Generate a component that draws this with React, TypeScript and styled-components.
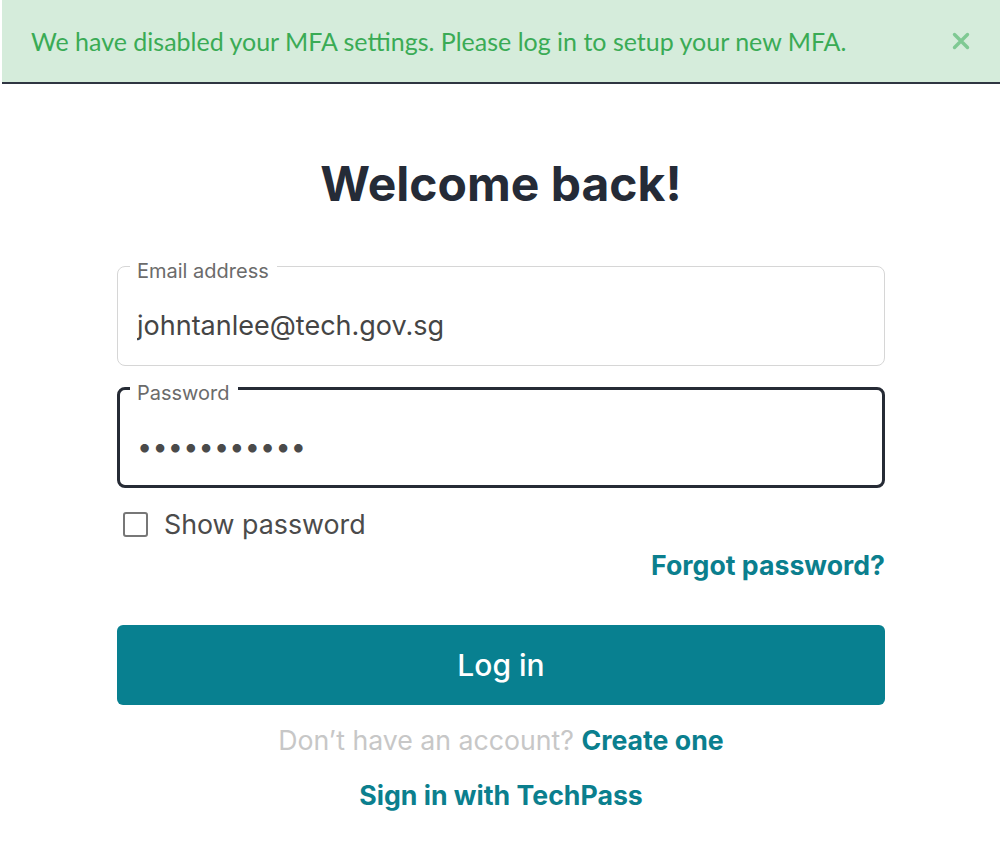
import React from 'react'
import styled, { createGlobalStyle } from 'styled-components'

const GlobalStyle = createGlobalStyle`
  html, body {
    margin: 0;
    padding: 0;
    background: #ffffff;
  }
  body {
    font-family: Inter, "Noto Sans", sans-serif;
  }
`

const Page = styled.div`
  width: 1000px;
  min-height: 868px;
  padding-left: 2px;
  box-sizing: border-box;
  background: #ffffff;
`

const Banner = styled.div`
  display: flex;
  align-items: center;
  justify-content: space-between;
  height: 84px;
  padding: 0 30px 0 29px;
  background: #d5ecdb;
  border-bottom: 2px solid #2f3542;
  box-sizing: border-box;
`

const BannerText = styled.span`
  font-family: Lato, "Open Sans", sans-serif;
  font-size: 25px;
  color: #3aab55;
`

const CloseButton = styled.button`
  border: none;
  background: none;
  padding: 0;
  display: flex;
  color: #7fc993;
  cursor: pointer;
`

const Main = styled.main`
  width: 768px;
  margin: 0 auto;
  display: flex;
  flex-direction: column;
  padding-top: 70px;
`

const Title = styled.h1`
  margin: 0 0 37px;
  text-align: center;
  font-size: 48px;
  font-weight: 700;
  color: #252b37;
`

const Field = styled.fieldset<{ $focused?: boolean }>`
  display: block;
  margin: 0 0 6px;
  padding: 0 18px ${(p) => (p.$focused ? '19px' : '20px')} ${(p) => (p.$focused ? '17px' : '19px')};
  border: ${(p) => (p.$focused ? '3px solid #262b35' : '1px solid #d6d6d6')};
  border-radius: 8px;
`

const Legend = styled.legend`
  padding: 10px 8px 0 7px;
  margin-left: -7px;
  font-size: 20px;
  line-height: 22px;
  color: #6b6b6b;
`

const Input = styled.input<{ $gap: number }>`
  display: block;
  border: none;
  outline: none;
  width: 100%;
  height: 40px;
  padding: 0;
  margin-top: ${(p) => p.$gap}px;
  font-family: Inter, sans-serif;
  font-size: 27px;
  color: #454545;
  background: transparent;
`

const PasswordInput = styled(Input)`
  letter-spacing: 0.2px;
  color: #4a4a4a;
`

const CheckRow = styled.label`
  display: flex;
  align-items: center;
  gap: 16px;
  margin-top: 14px;
  padding-left: 6px;
  font-size: 26.8px;
  line-height: 32px;
  color: #4b4b4b;
  cursor: pointer;
`

const Box = styled.span`
  width: 21px;
  height: 21px;
  border: 2.5px solid #777777;
  border-radius: 3px;
  display: inline-block;
`

const ForgotRow = styled.div`
  display: flex;
  justify-content: flex-end;
  margin-top: 9px;
  line-height: 32px;
`

const TealLink = styled.a`
  color: #0b7f8e;
  font-weight: 700;
  font-size: 26.7px;
  text-decoration: none;
  cursor: pointer;
`

const LoginButton = styled.button`
  margin-top: 44px;
  height: 80px;
  width: 100%;
  border: none;
  border-radius: 6px;
  background: #088090;
  color: #ffffff;
  font-family: Inter, sans-serif;
  font-size: 30px;
  font-weight: 500;
  cursor: pointer;
`

const SignupLine = styled.p`
  margin: 19px 0 0;
  text-align: center;
  font-size: 26.7px;
  line-height: 32px;
  color: #c7c7c7;
`

const TechPassLine = styled.div`
  margin-top: 23px;
  text-align: center;
  line-height: 32px;
`

const CloseIcon = () => (
  <svg width="18" height="18" viewBox="0 0 18 18" fill="none">
    <path
      d="M2.5 2.5 L15.5 15.5 M15.5 2.5 L2.5 15.5"
      stroke="currentColor"
      strokeWidth="3.4"
      strokeLinecap="round"
    />
  </svg>
)

const App = () => {
  return (
    <Page>
      <GlobalStyle />
      <Banner>
        <BannerText>
          We have disabled your MFA settings. Please log in to setup your new MFA.
        </BannerText>
        <CloseButton aria-label="Close">
          <CloseIcon />
        </CloseButton>
      </Banner>
      <Main>
        <Title>Welcome back!</Title>
        <Field>
          <Legend>Email address</Legend>
          <Input $gap={23} type="email" defaultValue="johntanlee@tech.gov.sg" />
        </Field>
        <Field $focused>
          <Legend>Password</Legend>
          <PasswordInput $gap={22} type="password" defaultValue="password123" />
        </Field>
        <CheckRow>
          <Box />
          Show password
        </CheckRow>
        <ForgotRow>
          <TealLink>Forgot password?</TealLink>
        </ForgotRow>
        <LoginButton>Log in</LoginButton>
        <SignupLine>
          Don’t have an account? <TealLink>Create one</TealLink>
        </SignupLine>
        <TechPassLine>
          <TealLink>Sign in with TechPass</TealLink>
        </TechPassLine>
      </Main>
    </Page>
  )
}

export default App
